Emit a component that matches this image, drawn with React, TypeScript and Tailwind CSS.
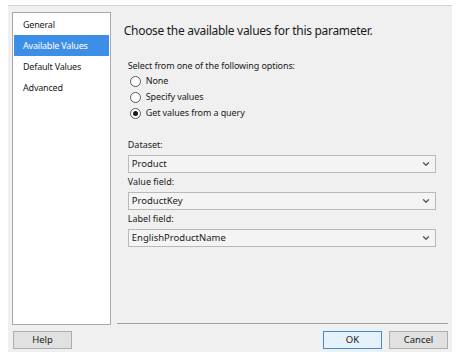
import { ChevronDown } from "lucide-react";

const NAV = ["General", "Available Values", "Default Values", "Advanced"];

const font = { fontFamily: "'Noto Sans', 'Open Sans', sans-serif" };

function Radio({ label, checked }: { label: string; checked?: boolean }) {
  return (
    <div className="flex items-center h-[16px] pl-[2px]">
      <span className="w-[11px] h-[11px] rounded-full border border-[#5a5a5a] bg-white flex items-center justify-center">
        {checked && <span className="w-[5px] h-[5px] rounded-full bg-[#1a1a1a]" />}
      </span>
      <span className="ml-[5px] text-[9px] tracking-[-0.1px] text-[#1a1a1a]">{label}</span>
    </div>
  );
}

function Field({ label, value }: { label: string; value: string }) {
  return (
    <div className="flex flex-col">
      <div className="h-[14px] flex items-center text-[9px] text-[#1a1a1a]">{label}</div>
      <div className="mt-[3px] h-[18px] w-[308px] border border-[#b9b9b9] bg-[#f4f4f4] flex items-center justify-between pl-[3px] pr-[4px]">
        <span className="text-[9.5px] text-[#1a1a1a]">{value}</span>
        <ChevronDown className="w-[10px] h-[10px] text-[#555]" strokeWidth={3} />
      </div>
    </div>
  );
}

function Btn({ label, primary, className = "" }: { label: string; primary?: boolean; className?: string }) {
  return (
    <button
      type="button"
      className={
        "h-[18px] w-[59px] flex items-center justify-center text-[9.5px] text-[#1a1a1a] border " +
        (primary ? "border-[#3c8ed8] bg-[#e5f1fb] " : "border-[#adadad] bg-[#e1e1e1] ") +
        className
      }
    >
      {label}
    </button>
  );
}

export default function App() {
  return (
    <div className="w-[474px] h-[358px] bg-white overflow-hidden" style={font}>
      <div className="ml-[8px] mt-[5px] w-[444px] h-[347px] bg-[#f0f0f0] border-t border-[#d4d4d4] flex flex-col px-[4px] pt-[6px]">
        <div className="flex h-[313px]">
          <div className="w-[99px] h-full bg-white border border-[#a9a9a9] pt-px px-px">
            {NAV.map((n, i) => (
              <div
                key={n}
                className={
                  "h-[21px] flex items-center pl-[9px] text-[9px] tracking-[-0.2px] " +
                  (i === 1 ? "bg-[#3d8ee6] text-white" : "text-[#1a1a1a]")
                }
              >
                {n}
              </div>
            ))}
          </div>
          <div className="ml-[6px] w-[332px] h-[312px] border-b border-[#a0a0a0] flex flex-col">
            <div className="mt-[11px] pl-[7px] h-[16px] flex items-center text-[12px] tracking-[-0.3px] text-[#1a1a1a]">
              Choose the available values for this parameter.
            </div>
            <div className="pl-[11px] mt-[20px] flex flex-col">
              <div className="h-[14px] flex items-center text-[9px] tracking-[-0.1px] text-[#1a1a1a]">
                Select from one of the following options:
              </div>
              <div className="flex flex-col">
                <Radio label="None" />
                <Radio label="Specify values" />
                <Radio label="Get values from a query" checked />
              </div>
              <div className="mt-[17px] flex flex-col gap-[2px]">
                <Field label="Dataset:" value="Product" />
                <Field label="Value field:" value="ProductKey" />
                <Field label="Label field:" value="EnglishProductName" />
              </div>
            </div>
          </div>
        </div>
        <div className="mt-[6px] flex items-center gap-[7px]">
          <Btn label="Help" className="ml-px mr-auto" />
          <Btn label="OK" primary />
          <Btn label="Cancel" />
        </div>
      </div>
    </div>
  );
}
